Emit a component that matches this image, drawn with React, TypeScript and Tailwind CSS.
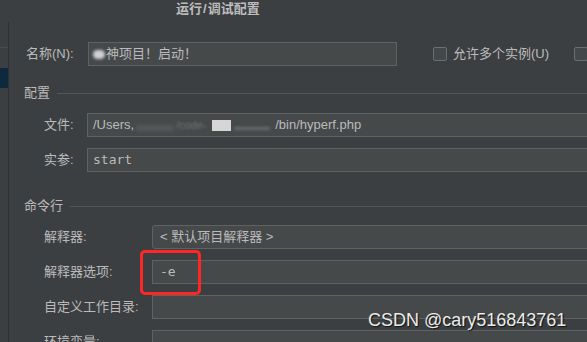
import React from "react";

const sans = "font-['Liberation_Sans','Noto_Sans_CJK_SC',sans-serif]";
const mono = "font-['DejaVu_Sans_Mono','Liberation_Mono',monospace]";

function Field({ children, className = "" }: { children?: React.ReactNode; className?: string }) {
  return (
    <div
      className={`h-[24px] shrink-0 w-[520px] bg-[#45494a] border border-[#5f6263] flex items-center text-[13px] text-[#bbbbbb] ${className}`}
    >
      {children}
    </div>
  );
}

function Section({ title, className = "" }: { title: string; className?: string }) {
  return (
    <div className={`h-[16px] flex items-center pl-[15px] ${className}`}>
      <span className="text-[13px] text-[#bbbbbb] leading-[16px]">{title}</span>
      <div className="flex-1 h-px bg-[#535658] ml-[7px]" />
    </div>
  );
}

function Row({ label, labelW, children, className = "" }: { label: string; labelW: string; children: React.ReactNode; className?: string }) {
  return (
    <div className={`h-[24px] flex items-center pl-[35px] ${className}`}>
      <div className={`${labelW} shrink-0 text-[13px] text-[#bbbbbb] leading-[16px] whitespace-nowrap`}>{label}</div>
      {children}
    </div>
  );
}

export default function App() {
  return (
    <div className={`relative w-[587px] h-[342px] overflow-hidden bg-[#3c3f41] flex flex-col ${sans}`}>
      <div className="h-[22px] shrink-0 pl-[176px] pt-[1px] text-[13px] leading-[16px] font-bold text-[#bdbdbd] whitespace-nowrap">
        运行<span className="mx-[1px]">/</span>调试配置
      </div>
      <div className="flex flex-1 min-h-0">
        <div className="w-[9px] shrink-0 border-r border-[#2e3032] flex flex-col">
          <div className="h-[26px] border-b border-[#4a4d4f]" />
          <div className="mt-[20px] h-[20px] bg-[#0d293e]" />
        </div>
        <div className="flex-1 min-w-0 flex flex-col">
          {/* Name row */}
          <div className="mt-[20px] h-[24px] flex items-center pl-[17px]">
            <div className="w-[62px] shrink-0 text-[13px] text-[#bbbbbb] leading-[16px] whitespace-nowrap">名称(N):</div>
            <div className="w-[309px] h-[24px] shrink-0 bg-[#45494a] border border-[#5f6263] flex items-center pl-[4px] text-[13px] text-[#bbbbbb] whitespace-nowrap">
              <span className="inline-block w-[12px] h-[9px] mr-[1px] rounded-full bg-[#f2f2f2] opacity-80 blur-[1.5px]" />神项目！启动！
            </div>
            <div className="ml-[36px] w-[14px] h-[14px] shrink-0 rounded-[2px] border border-[#6b6e70] bg-[#43494a]" />
            <div className="ml-[6px] text-[13px] text-[#bbbbbb] leading-[16px] whitespace-nowrap">允许多个实例(U)</div>
            <div className="ml-[25px] w-[14px] h-[14px] shrink-0 rounded-[2px] border border-[#6b6e70] bg-[#43494a]" />
          </div>

          <Section title="配置" className="mt-[19px]" />

          <Row label="文件:" labelW="w-[43px]" className="mt-[12px]">
            <Field className="pl-[5px] whitespace-nowrap">
              <span>/Users,</span>
              <span className="inline-block w-[38px] h-[4px] ml-[2px] mt-[6px] bg-[#e0e0e0] opacity-15 blur-[2px]" />
              <span className="inline-block w-[28px] ml-[2px] text-[11px] text-[#8f9293] opacity-60 blur-[0.8px]">/code-</span>
              <span className="inline-block w-[19px] h-[11px] ml-[8px] bg-[#d6d6d6]" />
              <span className="inline-block w-[36px] h-[3px] ml-[3px] mt-[6px] bg-[#cfcfcf] opacity-25 blur-[1.5px]" />
              <span className="ml-[5px]">/bin/hyperf.php</span>
            </Field>
          </Row>

          <Row label="实参:" labelW="w-[43px]" className="mt-[11px]">
            <Field className={`pl-[5px] ${mono}`}>start</Field>
          </Row>

          <Section title="命令行" className="mt-[26px]" />

          <Row label="解释器:" labelW="w-[108px]" className="mt-[11px]">
            <Field className="pl-[7px] rounded-[3px] bg-[#3c3f41] whitespace-nowrap">&lt; 默认项目解释器 &gt;</Field>
          </Row>
          <Row label="解释器选项:" labelW="w-[108px]" className="mt-[11px]">
            <Field className={`pl-[7px] ${mono}`}>-e</Field>
          </Row>
          <Row label="自定义工作目录:" labelW="w-[108px]" className="mt-[11px]">
            <Field />
          </Row>
          <Row label="环境变量:" labelW="w-[108px]" className="mt-[11px]">
            <Field />
          </Row>
        </div>
      </div>

      <div className="absolute left-[140px] top-[250px] w-[61px] h-[45px] rounded-[5px] border-[3px] border-[#ff2626]" />

      <div className="absolute left-[368px] top-[309px] text-[18px] leading-[22px] text-[#ececec] whitespace-nowrap font-['Liberation_Sans',sans-serif] [text-shadow:1px_1px_1px_#111]">
        CSDN @cary516843761
      </div>
    </div>
  );
}
